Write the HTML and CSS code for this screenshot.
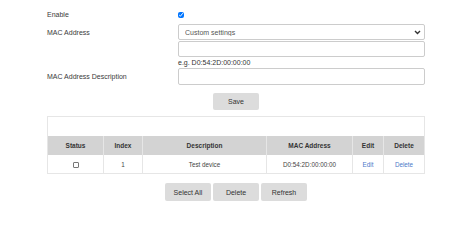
FILE: index.html
```html
<!DOCTYPE html>
<html lang="en">

<head>
  <meta charset="UTF-8">
  <meta name="viewport" content="width=device-width, initial-scale=1.0">
  <title>MAC Filter</title>
  <link rel="stylesheet" href="styles.css">
</head>

<body>
  <div class="page">
    <div class="row rowEnable">
      <label class="label">Enable</label>
      <div class="ctrl"><input type="checkbox" class="check" checked></div>
    </div>

    <div class="row rowMac">
      <label class="label">MAC Address</label>
      <div class="ctrl selectBox">
        <select class="select">
          <option>Custom settings</option>
        </select>
        <svg class="chevron" width="7" height="5" viewBox="0 0 7 5">
          <path d="M1 1 L3.5 3.5 L6 1" fill="none" stroke="#333" stroke-width="1.4"/>
        </svg>
      </div>
    </div>

    <div class="row rowMacInput">
      <span></span>
      <div class="ctrl">
        <input type="text" class="text">
        <div class="hint">e.g. D0:54:2D:00:00:00</div>
      </div>
    </div>

    <div class="row rowDesc">
      <label class="label">MAC Address Description</label>
      <div class="ctrl"><input type="text" class="text textDesc"></div>
    </div>

    <div class="btnBar saveBar">
      <button class="btn">Save</button>
    </div>

    <div class="tableBox">
      <div class="caption"></div>
      <table class="list">
        <thead>
          <tr>
            <th class="cStatus">Status</th>
            <th class="cIndex">Index</th>
            <th class="cDesc">Description</th>
            <th class="cMac">MAC Address</th>
            <th class="cEdit">Edit</th>
            <th class="cDel">Delete</th>
          </tr>
        </thead>
        <tbody>
          <tr>
            <td><input type="checkbox" class="rowCheck"></td>
            <td>1</td>
            <td>Test device</td>
            <td>D0:54:2D:00:00:00</td>
            <td><a href="#" class="link">Edit</a></td>
            <td><a href="#" class="link">Delete</a></td>
          </tr>
        </tbody>
      </table>
    </div>

    <div class="btnBar listBar">
      <button class="btn">Select All</button>
      <button class="btn">Delete</button>
      <button class="btn">Refresh</button>
    </div>
  </div>
</body>

</html>
```

FILE: styles.css
```css
body {
  margin: 0;
  background-color: #fff;
  font-family: "Liberation Sans", Arial, sans-serif;
  color: #333;
}

.page {
  width: 378px;
  padding: 8px 0 0 47px;
}

.row {
  display: grid;
  grid-template-columns: 131px 247px;
  align-items: center;
}

.label {
  font-size: 7px;
  color: #3a3a3a;
}

.ctrl {
  display: flex;
  flex-direction: column;
}

.rowEnable {
  height: 12px;
}

.check {
  width: 6px;
  height: 6px;
  margin: 1px 0 0 0;
}

.rowMac {
  margin-top: 4px;
}

.selectBox {
  position: relative;
}

.select {
  appearance: none;
  -webkit-appearance: none;
  height: 16px;
  width: 247px;
  padding: 0 0 0 6px;
  border: 1px solid #ccc;
  border-radius: 2px;
  background: #fff;
  font-family: inherit;
  font-size: 7px;
  color: #555;
  box-sizing: border-box;
}

.chevron {
  position: absolute;
  right: 4px;
  top: 6px;
}

.rowMacInput {
  margin-top: 1px;
}

.text {
  height: 16px;
  width: 247px;
  margin: 0;
  padding: 0 6px;
  border: 1px solid #ccc;
  border-radius: 2px;
  box-sizing: border-box;
  font-size: 7px;
}

.hint {
  margin-top: 1px;
  height: 10px;
  line-height: 10px;
  font-size: 7px;
  color: #333;
}

.textDesc {
  height: 17px;
}

.btnBar {
  display: flex;
  justify-content: center;
  gap: 2px;
}

.saveBar {
  margin-top: 8px;
}

.btn {
  width: 46px;
  height: 17px;
  padding: 0;
  border: none;
  border-radius: 2px;
  background-color: #dcdcdc;
  font-family: inherit;
  font-size: 7px;
  color: #333;
}

.tableBox {
  margin-top: 6px;
  border: 1px solid #e6e6e6;
}

.caption {
  height: 19px;
}

.list {
  width: 100%;
  border-collapse: collapse;
  table-layout: fixed;
  font-size: 6.3px;
}

.list th {
  height: 19px;
  padding: 0;
  background-color: #d3d3d3;
  border-left: 1px solid #e6e6e6;
  font-size: 6.5px;
  font-weight: bold;
  color: #333;
}

.list td {
  height: 18px;
  padding: 0;
  text-align: center;
  border-left: 1px solid #e6e6e6;
  color: #444;
}

.list th:first-child,
.list td:first-child {
  border-left: none;
}

.rowCheck {
  appearance: none;
  -webkit-appearance: none;
  display: block;
  width: 6px;
  height: 6px;
  margin: 1px auto 0;
  border: 1px solid #777;
  border-radius: 1px;
  background: #fff;
  box-sizing: border-box;
}

.cStatus { width: 55px; }
.cIndex { width: 38px; }
.cDesc { width: 123px; }
.cMac { width: 85px; }
.cEdit { width: 30px; }

.link {
  color: #4a78c8;
  text-decoration: none;
}

.listBar {
  margin-top: 9px;
}

.listBar .btn {
  height: 18px;
}
```
